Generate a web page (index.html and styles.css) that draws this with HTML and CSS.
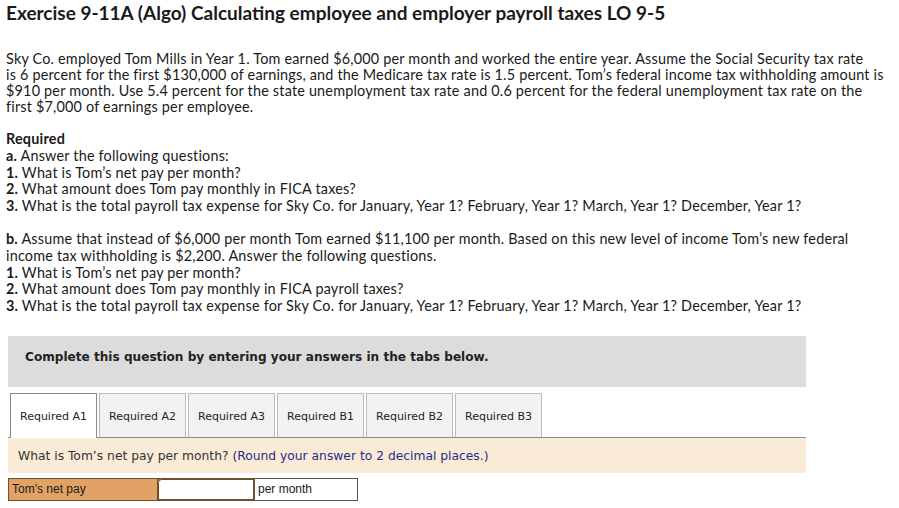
FILE: index.html
```html
<!DOCTYPE html>
<html lang="en">
<head>
    <meta charset="UTF-8">
    <title>Exercise 9-11A (Algo)</title>
    <link rel="stylesheet" href="styles.css">
</head>
<body>
    <div class="question">
        <h1 class="title">Exercise 9-11A (Algo) Calculating employee and employer payroll taxes LO 9-5</h1>

        <p class="intro">
            Sky Co. employed Tom Mills in Year 1. Tom earned $6,000 per month and worked the entire year. Assume the Social Security tax rate<br>
            is 6 percent for the first $130,000 of earnings, and the Medicare tax rate is 1.5 percent. Tom’s federal income tax withholding amount is<br>
            $910 per month. Use 5.4 percent for the state unemployment tax rate and 0.6 percent for the federal unemployment tax rate on the<br>
            first $7,000 of earnings per employee.
        </p>

        <div class="required">
            <div class="req-title">Required</div>
            <div><b>a.</b> Answer the following questions:</div>
            <div><b>1.</b> What is Tom’s net pay per month?</div>
            <div><b>2.</b> What amount does Tom pay monthly in FICA taxes?</div>
            <div><b>3.</b> What is the total payroll tax expense for Sky Co. for January, Year 1? February, Year 1? March, Year 1? December, Year 1?</div>
            <div class="part-b"><b>b.</b> Assume that instead of $6,000 per month Tom earned $11,100 per month. Based on this new level of income Tom’s new federal<br>
                income tax withholding is $2,200. Answer the following questions.</div>
            <div><b>1.</b> What is Tom’s net pay per month?</div>
            <div><b>2.</b> What amount does Tom pay monthly in FICA payroll taxes?</div>
            <div><b>3.</b> What is the total payroll tax expense for Sky Co. for January, Year 1? February, Year 1? March, Year 1? December, Year 1?</div>
        </div>
    </div>

    <div class="answer-area">
        <div class="instructions">Complete this question by entering your answers in the tabs below.</div>

        <div class="tabs">
            <span class="tab active">Required A1</span>
            <span class="tab">Required A2</span>
            <span class="tab">Required A3</span>
            <span class="tab">Required B1</span>
            <span class="tab">Required B2</span>
            <span class="tab">Required B3</span>
        </div>

        <div class="prompt">
            What is Tom’s net pay per month? <span class="hint">(Round your answer to 2 decimal places.)</span>
        </div>

        <div class="answer-row">
            <div class="label-cell">Tom's net pay</div>
            <div class="input-cell"><input type="text" class="answer-input"></div>
            <div class="unit-cell">per month</div>
        </div>
    </div>
</body>
</html>
```

FILE: styles.css
```css
* {
    margin: 0;
    padding: 0;
    box-sizing: border-box;
}

body {
    background: white;
    color: #1a1a1a;
}

.question {
    padding: 3px 6px 0 6px;
    font-family: Lato, "Liberation Sans", sans-serif;
    font-size: 14.4px;
    letter-spacing: 0.2px;
}

.title {
    font-size: 19px;
    font-weight: bold;
    line-height: 20px;
    letter-spacing: 0;
    margin-bottom: 28px;
}

.intro {
    line-height: 16px;
    margin-bottom: 16px;
}

.required {
    line-height: 16.8px;
}

.req-title {
    font-weight: bold;
}

.part-b {
    margin-top: 16px;
}

.answer-area {
    margin: 21px 0 0 8px;
    width: 798px;
    font-family: "DejaVu Sans", Verdana, sans-serif;
}

.instructions {
    background: #dcdcdc;
    height: 51px;
    padding: 14px 0 0 17px;
    font-size: 12.1px;
    font-weight: bold;
    color: #222;
}

.tabs {
    display: flex;
    gap: 2px;
    margin-top: 6px;
    padding-left: 2px;
    border-bottom: 1px solid #8a8a8a;
}

.tab {
    width: 87px;
    height: 44px;
    line-height: 45px;
    text-align: center;
    font-size: 11px;
    color: #222;
    background: #f2f2f2;
    border: 1px solid #bbb;
    border-bottom: none;
}

.tab.active {
    background: white;
    border-color: #8a8a8a;
    height: 45px;
    margin-bottom: -1px;
}

.prompt {
    background: #faebd7;
    height: 35px;
    padding: 11px 0 0 10px;
    font-size: 12.3px;
    color: #333;
}

.hint {
    color: #2b2b8c;
}

.answer-row {
    display: flex;
    margin-top: 5px;
    height: 23px;
    font-family: "Liberation Sans", Arial, sans-serif;
    font-size: 12px;
}

.label-cell {
    width: 149px;
    background: #e3a265;
    border: 1px solid #6d5232;
    border-right: none;
    padding: 3px 0 0 3px;
}

.input-cell {
    width: 98px;
    border: 1px solid #6d5232;
    position: relative;
}

.input-cell::before {
    content: "";
    position: absolute;
    left: 0;
    top: 0;
    border-top: 4px solid #b06a2a;
    border-right: 4px solid transparent;
}

.answer-input {
    width: 100%;
    height: 100%;
    border: 1px solid #6d5232;
    outline: none;
}

.unit-cell {
    width: 103px;
    border: 1px solid #555;
    border-left: none;
    padding: 3px 0 0 3px;
}
```
